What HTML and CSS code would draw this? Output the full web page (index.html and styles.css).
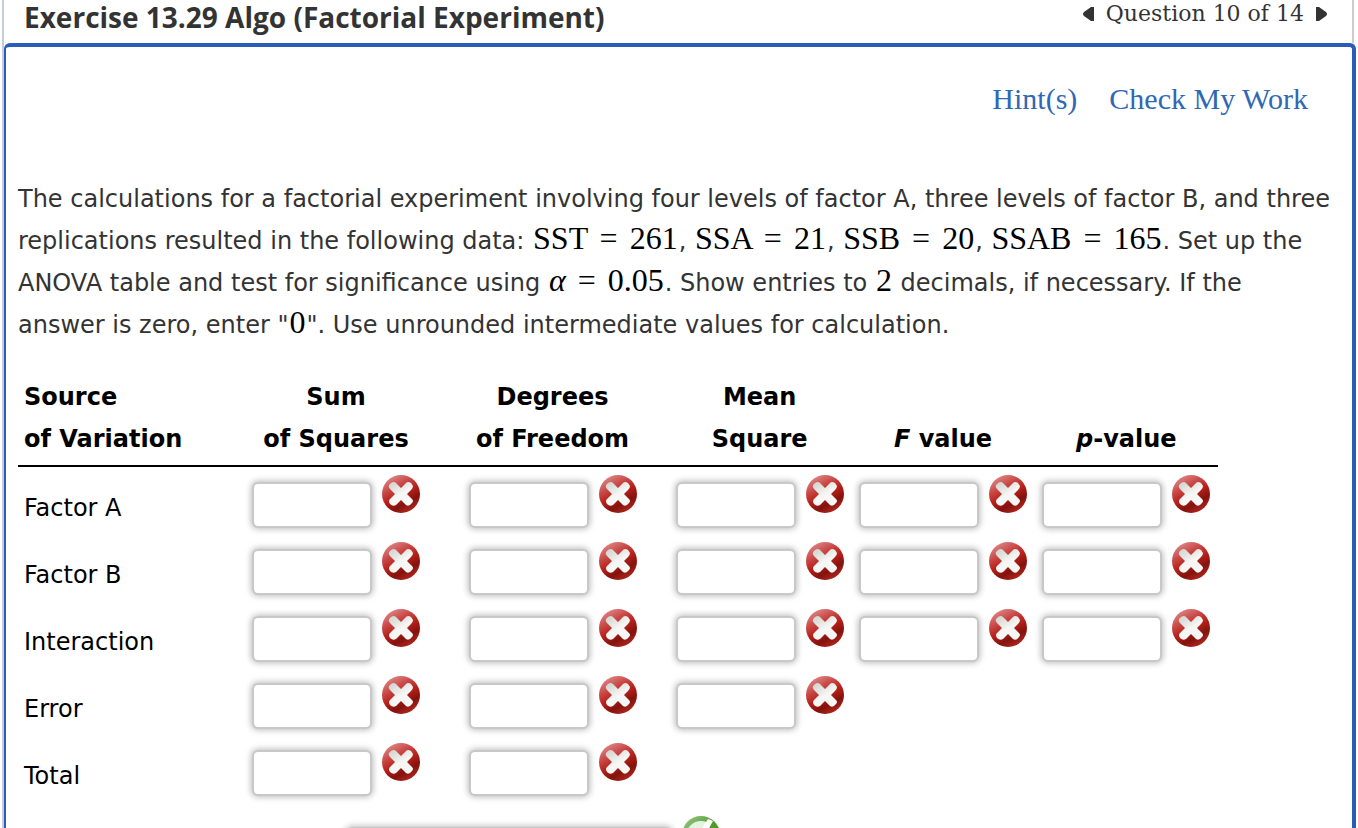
FILE: index.html
```
<!DOCTYPE html>
<html lang="en">
<head>
<meta charset="utf-8">
<title>Exercise 13.29 Algo (Factorial Experiment)</title>
<link rel="stylesheet" href="styles.css">
<script src="table.js" defer></script>
</head>
<body>
<svg class="defs" aria-hidden="true">
  <defs>
    <linearGradient id="red" x1="0.2" y1="0" x2="0.75" y2="1">
      <stop offset="0" stop-color="#e08d8d"/><stop offset="0.3" stop-color="#c94a48"/>
      <stop offset="0.52" stop-color="#b8211b"/><stop offset="0.75" stop-color="#84120d"/><stop offset="1" stop-color="#b52a21"/>
    </linearGradient>
    <linearGradient id="cross" x1="0" y1="0" x2="0.6" y2="1">
      <stop offset="0" stop-color="#cdd0c9"/><stop offset="0.6" stop-color="#f6f6f4"/>
    </linearGradient>
    <linearGradient id="green" x1="0" y1="0" x2="1" y2="1">
      <stop offset="0" stop-color="#9ccb86"/><stop offset="0.5" stop-color="#57a03a"/><stop offset="1" stop-color="#2f7d16"/>
    </linearGradient>
    <symbol id="wrong" viewBox="0 0 38 38">
      <circle cx="19" cy="19" r="19" fill="url(#red)"/>
      <path d="M9 8Q12 6 14 8L19 13L24 8Q26 6 29 8L31 11Q31 13 29 15L25 19L30 24Q32 26 30 28Q27 32 24 30L19 25L14 30Q11 32 8 29Q6 26 8 24L13 19L8 14Q6 12 7 10Z" fill="url(#cross)"/>
    </symbol>
    <symbol id="right" viewBox="0 0 38 38">
      <circle cx="19" cy="19" r="19" fill="url(#green)"/>
      <circle cx="19" cy="20" r="15" fill="#e2f4e2"/>
      <path d="M30 4L38 13L37 24L30 30L21 17Z" fill="#4e9a2c"/>
      <path d="M9 19L18 29L31 5L26 3L17 17Z" fill="#fff"/>
    </symbol>
  </defs>
</svg>
<div class="page">
  <header class="bar">
    <h1 class="title">Exercise 13.29 Algo (Factorial Experiment)</h1>
    <nav class="pager">
      <button class="step" aria-label="Previous question"><svg width="11" height="14" viewBox="0 0 11 14"><path d="M11 0V14H8L1 9Q-1 7 1 5L8 0Z" fill="#333"/></svg></button>
      <span>Question 10 of 14</span>
      <button class="step" aria-label="Next question"><svg width="11" height="14" viewBox="0 0 11 14"><path d="M0 0V14H3L10 9Q12 7 10 5L3 0Z" fill="#333"/></svg></button>
    </nav>
  </header>
  <main class="panel">
    <div class="links"><a href="#hints">Hint(s)</a><a href="#check">Check My Work</a></div>
    <p class="prompt">The calculations for a factorial experiment involving four levels of factor A, three levels of factor B, and three replications resulted in the following data: <span class="math">SST <span class="eq">=</span> 261</span>, <span class="math">SSA <span class="eq">=</span> 21</span>, <span class="math">SSB <span class="eq">=</span> 20</span>, <span class="math">SSAB <span class="eq">=</span> 165</span>. Set up the ANOVA table and test for significance using <span class="math"><i>α</i> <span class="eq">=</span> 0.05</span>. Show entries to <span class="math">2</span> decimals, if necessary. If the answer is zero, enter "<span class="math">0</span>". Use unrounded intermediate values for calculation.</p>
    <table class="anova">
      <colgroup><col class="c-source"><col class="c-sum"><col class="c-degrees"><col class="c-stat"><col class="c-stat"><col class="c-stat"></colgroup>
      <thead>
        <tr>
          <th scope="col">Source<br>of Variation</th>
          <th scope="col">Sum<br>of Squares</th>
          <th scope="col">Degrees<br>of Freedom</th>
          <th scope="col">Mean<br>Square</th>
          <th scope="col"><i>F</i> value</th>
          <th scope="col"><i>p</i>-value</th>
        </tr>
      </thead>
      <tbody id="rows"></tbody>
    </table>
    <div class="answer wide">
      <input class="box" type="text" aria-label="p-value range">
      <svg class="mark" role="img" aria-label="Correct"><use href="#right"/></svg>
    </div>
  </main>
</div>
</body>
</html>
```
FILE: table.js
```
const columns = ["Sum of Squares", "Degrees of Freedom", "Mean Square", "F value", "p-value"];
const sources = [["Factor A", 5], ["Factor B", 5], ["Interaction", 5], ["Error", 3], ["Total", 2]];

document.getElementById("rows").innerHTML = sources.map(([name, count]) => {
  const cells = columns.map((column, i) => i < count
    ? `<td><div class="answer"><input class="box" type="text" aria-label="${name}, ${column}"><svg class="mark" role="img" aria-label="Incorrect"><use href="#wrong"/></svg></div></td>`
    : "<td></td>").join("");
  return `<tr><th scope="row">${name}</th>${cells}</tr>`;
}).join("");
```
FILE: styles.css
```
* { box-sizing: border-box; }
html { overflow: hidden; }
body {
  margin: 0;
  background: #fff;
  color: #333;
  font: 24px/42px "DejaVu Sans", Verdana, sans-serif;
}
.defs { position: absolute; width: 0; height: 0; }
.page {
  margin: 0 2px;
  min-height: 100vh;
  border-left: 2px solid #c8ccd6;
}
.bar {
  display: flex;
  justify-content: space-between;
  align-items: flex-start;
  height: 43px;
  margin-right: 2px;
  padding: 0 25px 0 20px;
  border-right: 2px solid #ccc;
}
.title {
  margin: 0;
  font: bold 28px/34px "Open Sans", sans-serif;
}
.pager {
  display: flex;
  align-items: center;
  gap: 12px;
  font: 22px/28px "DejaVu Serif", serif;
}
.step {
  display: flex;
  padding: 0;
  border: 0;
  background: none;
}
.panel {
  padding: 0 12px;
  border: solid #2a5db8;
  border-width: 4px 4px 0 2px;
  border-radius: 6px 6px 0 0;
}
.links {
  display: flex;
  justify-content: flex-end;
  gap: 32px;
  padding: 32px 32px 0 0;
  font: 30px/40px "Liberation Serif", serif;
}
.links a { color: #2f68b5; text-decoration: none; }
.prompt { margin: 59px 0 30px; padding-right: 8px; }
.math {
  margin: 0 1px;
  color: #000;
  font: 32px/28px "Liberation Serif", serif;
  white-space: nowrap;
}
.eq { margin: 0 4px; }
.anova {
  width: 1200px;
  max-width: 100%;
  border-collapse: separate;
  border-spacing: 0;
  table-layout: fixed;
  color: #000;
}
.c-source { width: 217px; }
.c-sum { width: 202px; }
.c-degrees { width: 231px; }
.anova th, .anova td { padding: 0 6px; }
.anova thead th {
  height: 91px;
  padding-bottom: 5px;
  border-bottom: 2px solid #000;
  vertical-align: bottom;
}
.anova th:first-child { text-align: left; }
.anova tbody th { padding-top: 14px; font-weight: normal; }
.anova tbody tr { height: 67px; }
.anova tbody td { padding: 8px 0 0; vertical-align: top; }
.answer {
  display: flex;
  justify-content: center;
  align-items: flex-start;
  gap: 10px;
}
.box {
  width: 120px;
  height: 46px;
  margin: 7px 0 0;
  padding: 0 8px;
  border: 2px solid #c8c8c8;
  border-radius: 6px;
  box-shadow: 0 0 6px 1px #bbb;
  background: #fff;
  font: inherit;
}
.mark { width: 38px; height: 38px; }
.wide {
  justify-content: flex-start;
  padding: 14px 0 0 328px;
}
.wide .box { width: 326px; margin-top: 11px; }
```
